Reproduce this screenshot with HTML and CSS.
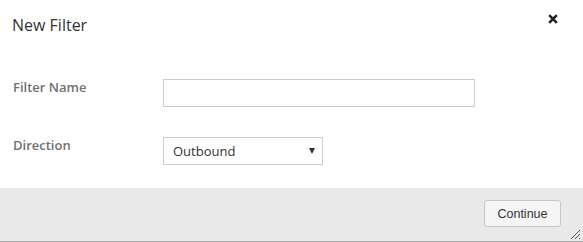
FILE: index.html
```html
<!DOCTYPE html>
<html lang="en">
  <head>
    <meta charset="UTF-8" />
    <meta name="viewport" content="width=device-width, initial-scale=1.0" />
    <title>New Filter</title>
    <link rel="stylesheet" href="styles.css">
  </head>
  <body>
    <div class="dialog">
      <div class="header">
        <span class="title">New Filter</span>
        <button class="close" title="Close">
          <svg width="10" height="10" viewBox="0 0 10 10">
            <path d="M1.2 1.2 L8.8 8.8 M8.8 1.2 L1.2 8.8" stroke="#222" stroke-width="2.6" />
          </svg>
        </button>
      </div>

      <form class="form">
        <label for="filterName">Filter Name</label>
        <input type="text" id="filterName" class="text-input" />

        <label for="direction">Direction</label>
        <div class="select-wrap">
          <select id="direction" class="select">
            <option>Outbound</option>
            <option>Inbound</option>
          </select>
        </div>
      </form>

      <div class="footer">
        <button class="continue">Continue</button>
        <svg class="grip" width="12" height="12" viewBox="0 0 12 12">
          <path d="M11 2 L2 11 M11 6 L6 11 M11 10 L10 11" stroke="#555" stroke-width="1" />
        </svg>
      </div>
    </div>
  </body>
</html>
```

FILE: styles.css
```css
body {
  margin: 0;
  font-family: "Open Sans", sans-serif;
  background-color: #fff;
}

.dialog {
  display: flex;
  flex-direction: column;
  height: 100vh;
  box-sizing: border-box;
}

.header {
  display: flex;
  justify-content: space-between;
  align-items: flex-start;
  height: 50px;
  box-sizing: border-box;
  padding: 15px 25px 0 12px;
}

.title {
  font-size: 16px;
  line-height: 20px;
  color: #333;
}

.close {
  margin-top: -1px;
  padding: 0;
  border: 0;
  background: none;
  cursor: pointer;
  line-height: 0;
}

.form {
  display: grid;
  grid-template-columns: 150px auto;
  row-gap: 30px;
  justify-content: start;
  align-items: start;
  margin: 29px 0 0;
  padding-left: 13px;
}

.form label {
  font-size: 13px;
  font-weight: 600;
  line-height: 16px;
  color: #707070;
}

.text-input {
  width: 312px;
  height: 28px;
  box-sizing: border-box;
  margin: 0;
  border: 1px solid #ccc;
  font-family: inherit;
  font-size: 13px;
}

.select-wrap {
  position: relative;
  width: 160px;
}

.select-wrap::after {
  content: "";
  position: absolute;
  right: 8px;
  top: 11px;
  border-left: 3px solid transparent;
  border-right: 3px solid transparent;
  border-top: 6px solid #333;
  pointer-events: none;
}

.select {
  appearance: none;
  -webkit-appearance: none;
  width: 160px;
  height: 28px;
  box-sizing: border-box;
  margin: 0;
  padding: 0 0 0 9px;
  border: 1px solid #ccc;
  border-radius: 0;
  background-color: #fff;
  font-family: inherit;
  font-size: 13px;
  color: #333;
}

.footer {
  position: relative;
  display: flex;
  justify-content: flex-end;
  align-items: flex-start;
  margin-top: auto;
  height: 54px;
  box-sizing: border-box;
  padding: 12px 22px 0 0;
  background-color: #e9e9e9;
  border-bottom: 1px solid #aaa;
}

.continue {
  width: 77px;
  height: 27px;
  border: 1px solid #c5c5c5;
  border-radius: 3px;
  background-color: #f5f5f5;
  font-family: "Liberation Sans", Arial, sans-serif;
  font-size: 12.5px;
  color: #333;
  cursor: pointer;
}

.grip {
  position: absolute;
  right: 2px;
  bottom: 1px;
}
```
